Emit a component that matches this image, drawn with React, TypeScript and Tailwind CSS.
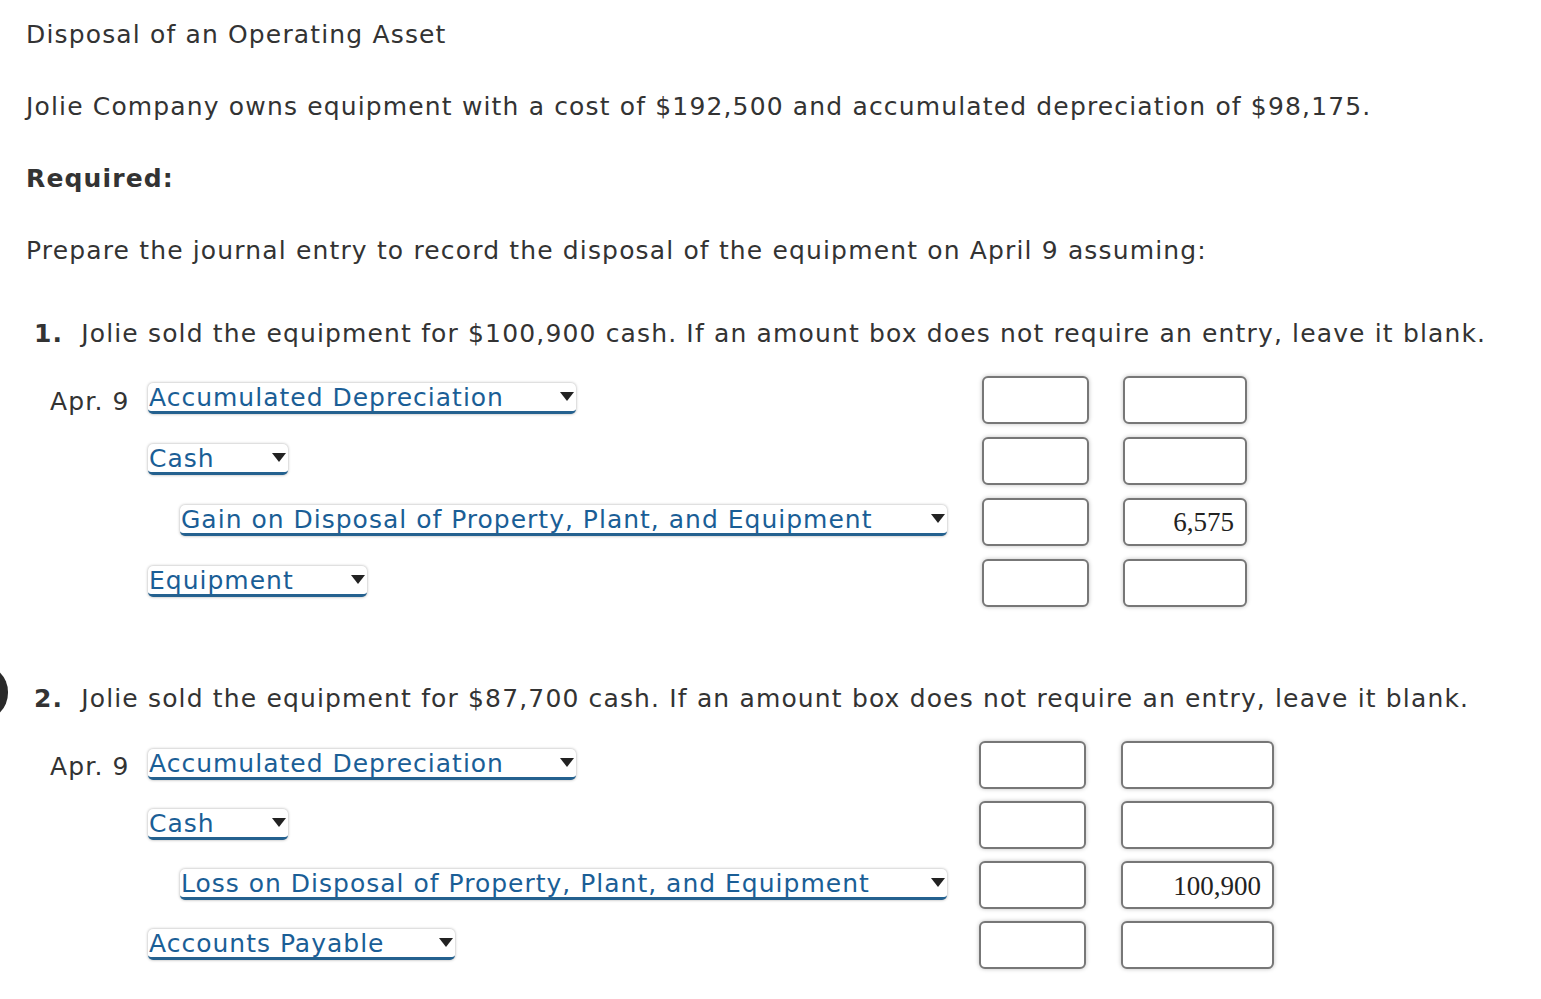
import React from 'react';

type Row = { account: string; width: string; indent?: boolean; debit?: string; credit?: string };

const Select = ({ label, width }: { label: string; width: string }) => (
  <div className={`relative h-[31px] ${width} rounded-[5px] bg-white shadow-[0_0_3px_rgba(0,0,0,0.35)] border-b-[3px] border-[#24618f] flex items-center`}>
    <span className="text-[#1a5e96] leading-none pt-[1px] pl-[1px] whitespace-nowrap tracking-[1px]">{label}</span>
    <span className="absolute right-[2px] top-[9px] w-0 h-0 border-l-[7px] border-r-[7px] border-t-[9px] border-l-transparent border-r-transparent border-t-[#222]" />
  </div>
);

const Amount = ({ value, width }: { value?: string; width: string }) => (
  <div className={`h-[48px] ${width} rounded-[6px] border-2 border-[#777] bg-white shadow-[0_0_4px_rgba(0,0,0,0.25)] flex items-center justify-end pr-[11px] pt-[2px] text-[27px] tracking-normal text-[#222] font-['Liberation_Serif',serif]`}>
    {value}
  </div>
);

const Entry = ({ rows, c1, c2, gap, rowGap }: { rows: Row[]; c1: string; c2: string; gap: string; rowGap: string }) => (
  <div className={`flex flex-col ${rowGap}`}>
    {rows.map((r, i) => (
      <div key={i} className="flex items-center">
        <div className="w-[148px] pl-[50px] mt-[4px] shrink-0">{i === 0 ? 'Apr. 9' : ''}</div>
        <div className={`flex-1 ${r.indent ? 'pl-[32px]' : ''} -mt-[2px]`}>
          <Select label={r.account} width={r.width} />
        </div>
        <div className={`flex ${gap}`}>
          <Amount value={r.debit} width={c1} />
          <Amount value={r.credit} width={c2} />
        </div>
      </div>
    ))}
  </div>
);

export default function App() {
  return (
    <div className="relative w-[1541px] h-[999px] bg-white text-[#333] text-[25px] tracking-[1.15px] font-['DejaVu_Sans',Verdana,sans-serif] overflow-hidden">
      <div className="absolute left-[-48px] top-[664px] w-[56px] h-[57px] rounded-full bg-[#2a2a2a]" />
      <div className="pl-[26px] pt-[18px]">
        <p className="leading-[34px]">Disposal of an Operating Asset</p>
        <p className="leading-[34px] mt-[38px]">Jolie Company owns equipment with a cost of $192,500 and accumulated depreciation of $98,175.</p>
        <p className="leading-[34px] mt-[38px] font-bold">Required:</p>
        <p className="leading-[34px] mt-[38px]">Prepare the journal entry to record the disposal of the equipment on April 9 assuming:</p>
      </div>

      <div className="mt-[47px] pl-[34px] flex gap-[18px]">
        <span className="font-bold">1.</span>
        <span>Jolie sold the equipment for $100,900 cash. If an amount box does not require an entry, leave it blank.</span>
      </div>
      <div className="mt-[23px] w-[1247px]">
        <Entry
          c1="w-[107px]"
          c2="w-[124px]"
          gap="gap-[34px]"
          rowGap="gap-[13px]"
          rows={[
            { account: 'Accumulated Depreciation', width: 'w-[428px]' },
            { account: 'Cash', width: 'w-[140px]' },
            { account: 'Gain on Disposal of Property, Plant, and Equipment', width: 'w-[767px]', indent: true, credit: '6,575' },
            { account: 'Equipment', width: 'w-[219px]' },
          ]}
        />
      </div>

      <div className="mt-[73px] pl-[34px] flex gap-[18px]">
        <span className="font-bold">2.</span>
        <span>Jolie sold the equipment for $87,700 cash. If an amount box does not require an entry, leave it blank.</span>
      </div>
      <div className="mt-[24px] w-[1274px]">
        <Entry
          c1="w-[107px]"
          c2="w-[153px]"
          gap="gap-[35px]"
          rowGap="gap-[12px]"
          rows={[
            { account: 'Accumulated Depreciation', width: 'w-[428px]' },
            { account: 'Cash', width: 'w-[140px]' },
            { account: 'Loss on Disposal of Property, Plant, and Equipment', width: 'w-[767px]', indent: true, credit: '100,900' },
            { account: 'Accounts Payable', width: 'w-[307px]' },
          ]}
        />
      </div>
    </div>
  );
}
